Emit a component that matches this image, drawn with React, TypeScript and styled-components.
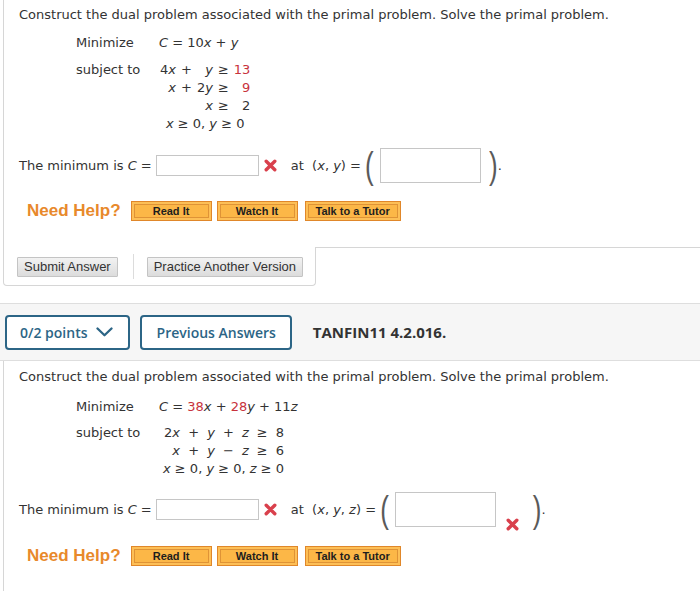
import React from 'react';
import styled, { createGlobalStyle } from 'styled-components';

const GlobalStyle = createGlobalStyle`
  html, body { margin: 0; padding: 0; background: #fff; }
  body {
    font-family: "DejaVu Sans", Verdana, sans-serif;
    font-size: 13px;
    color: #333;
  }
  * { box-sizing: border-box; }
`;

const Page = styled.div`
  width: 700px;
  height: 591px;
  overflow: hidden;
  background: #fff;
`;

const Body = styled.div<{ $top: number; $bottom: number }>`
  margin-left: 3px;
  border-left: 1px solid #d6d6d6;
  padding: ${p => p.$top}px 0 ${p => p.$bottom}px 15px;
`;

const Prompt = styled.p`
  margin: 0;
  line-height: 18px;
`;

const Problem = styled.div<{ $top: number; $rowGap: number }>`
  margin: ${p => p.$top}px 0 0 57px;
  display: grid;
  grid-template-columns: 83px auto;
  row-gap: ${p => p.$rowGap}px;
  align-items: start;
  line-height: 18px;
`;

const Var = styled.i`
  font-style: italic;
`;

const Red = styled.span`
  color: #c8323c;
`;

const Constraints = styled.div<{ $cols: number; $gap: number; $shift: number }>`
  display: grid;
  grid-template-columns: repeat(${p => p.$cols}, auto);
  column-gap: ${p => p.$gap}px;
  justify-items: end;
  justify-content: start;
  margin-left: ${p => p.$shift}px;
  line-height: 18px;
`;

const SpanRow = styled.span`
  grid-column: 1 / -1;
  justify-self: center;
`;

const AnswerRow = styled.div<{ $top: number }>`
  display: flex;
  align-items: center;
  height: 36px;
  margin-top: ${p => p.$top}px;
  white-space: pre;
`;

const SmallInput = styled.input`
  width: 103px;
  height: 21px;
  margin: 1px 0 0 4px;
  padding: 0;
  border: 1px solid #c6c6c6;
  background: #fff;
`;

const BigInput = styled.input`
  width: 101px;
  height: 35px;
  margin: 0 0 0 6px;
  padding: 0;
  border: 1px solid #c6c6c6;
  background: #fff;
`;

const Paren = styled.span`
  display: inline-block;
  font-family: "Liberation Sans", Arial, sans-serif;
  font-size: 26px;
  line-height: 1;
  color: #5a5a5a;
  transform: scaleY(1.4);
`;

const MarkWrap = styled.span<{ $left: number; $right: number; $low?: boolean }>`
  display: inline-flex;
  margin-left: ${p => p.$left}px;
  margin-right: ${p => p.$right}px;
  align-self: ${p => (p.$low ? 'flex-end' : 'center')};
  margin-bottom: ${p => (p.$low ? '-4px' : '0')};
`;

const WrongMark = ({ left, right, low }: { left: number; right: number; low?: boolean }) => (
  <MarkWrap $left={left} $right={right} $low={low}>
    <svg width="13" height="13" viewBox="0 0 13 13">
      <path d="M2.2 2.2 L10.8 10.8 M10.8 2.2 L2.2 10.8" stroke="#d9404c" strokeWidth="3.4" strokeLinecap="round" />
    </svg>
  </MarkWrap>
);

const HelpRow = styled.div<{ $top: number }>`
  display: flex;
  align-items: center;
  height: 20px;
  margin-top: ${p => p.$top}px;
`;

const HelpLabel = styled.span`
  font-family: "Liberation Sans", Arial, sans-serif;
  font-weight: bold;
  font-size: 17px;
  color: #e8892b;
  margin: 0 10px 0 8px;
`;

const HelpButton = styled.button<{ $gap: number }>`
  height: 20px;
  min-width: 81px;
  padding: 0 10px;
  margin-right: ${p => p.$gap}px;
  font-family: "Liberation Sans", Arial, sans-serif;
  font-weight: bold;
  font-size: 11px;
  color: #1e1e1e;
  background: #fcb747;
  border: 1px solid #e0872a;
  box-shadow: inset 0 0 0 2px #fdbf56, inset 0 0 0 3px #df9336;
  cursor: pointer;
`;

const Footer = styled.div`
  display: flex;
`;

const ActionTab = styled.div`
  margin-left: 3px;
  width: 313px;
  height: 39px;
  border: 1px solid #d6d6d6;
  border-top: none;
  border-radius: 0 0 4px 4px;
  display: flex;
  align-items: center;
  padding: 1px 0 0 13px;
`;

const FooterRest = styled.div`
  flex: 1;
  border-top: 1px solid #d6d6d6;
`;

const GrayButton = styled.button`
  height: 20px;
  padding: 0 6px;
  font-family: "Liberation Sans", Arial, sans-serif;
  font-size: 13px;
  color: #333;
  background: linear-gradient(#f2f2f2, #dcdcdc);
  border: 1px solid #c4c4c4;
  border-radius: 1px;
`;

const Divider = styled.span`
  width: 1px;
  height: 25px;
  background: #dcdcdc;
  margin: 0 13px 0 15px;
`;

const QuestionHeader = styled.div`
  margin-top: 17px;
  height: 58px;
  background: #f6f6f6;
  border-top: 1px solid #dedede;
  border-bottom: 1px solid #dedede;
  display: flex;
  align-items: center;
  padding-left: 5px;
`;

const OutlineButton = styled.button<{ $pl: number; $pr: number }>`
  height: 35px;
  display: inline-flex;
  align-items: center;
  gap: 8px;
  padding: 0 ${p => p.$pr}px 0 ${p => p.$pl}px;
  margin-right: 10px;
  background: #fff;
  border: 2px solid #2c6586;
  border-radius: 4px;
  font-family: "Open Sans", "Noto Sans", sans-serif;
  font-weight: 600;
  font-size: 14px;
  color: #2c6586;
`;

const QuestionTitle = styled.span`
  margin-left: 11px;
  font-family: "Open Sans", "Noto Sans", sans-serif;
  font-weight: 700;
  font-size: 15px;
  color: #333;
`;

const Chevron = () => (
  <svg width="17" height="10" viewBox="0 0 17 10">
    <polyline points="1.5,1.5 8.5,8.3 15.5,1.5" fill="none" stroke="#2c6586" strokeWidth="2.3" strokeLinecap="round" strokeLinejoin="round" />
  </svg>
);

const Help = ({ top }: { top: number }) => (
  <HelpRow $top={top}>
    <HelpLabel>Need Help?</HelpLabel>
    <HelpButton $gap={5}>Read It</HelpButton>
    <HelpButton $gap={7}>Watch It</HelpButton>
    <HelpButton $gap={0}>Talk to a Tutor</HelpButton>
  </HelpRow>
);

const PROMPT = 'Construct the dual problem associated with the primal problem. Solve the primal problem.';

export default function App() {
  return (
    <Page>
      <GlobalStyle />
      <Body $top={6} $bottom={26}>
        <Prompt>{PROMPT}</Prompt>
        <Problem $top={10} $rowGap={9}>
          <span>Minimize</span>
          <span>
            <Var>C</Var> = 10<Var>x</Var> + <Var>y</Var>
          </span>
          <span>subject to</span>
          <Constraints $cols={5} $gap={5} $shift={1}>
            <span>4<Var>x</Var></span>
            <span>+</span>
            <span><Var>y</Var></span>
            <span>≥</span>
            <Red>13</Red>
            <span><Var>x</Var></span>
            <span>+</span>
            <span>2<Var>y</Var></span>
            <span>≥</span>
            <Red>9</Red>
            <span />
            <span />
            <span><Var>x</Var></span>
            <span>≥</span>
            <span>2</span>
            <SpanRow>
              <Var>x</Var> ≥ 0, <Var>y</Var> ≥ 0
            </SpanRow>
          </Constraints>
        </Problem>
        <AnswerRow $top={14}>
          <span>The minimum is <Var>C</Var> =</span>
          <SmallInput readOnly />
          <WrongMark left={5} right={14} />
          <span>at  (<Var>x</Var>, <Var>y</Var>) = </span>
          <Paren>(</Paren>
          <BigInput readOnly />
          <span>  </span>
          <Paren>)</Paren>
          <span>.</span>
        </AnswerRow>
        <Help top={18} />
      </Body>
      <Footer>
        <ActionTab>
          <GrayButton>Submit Answer</GrayButton>
          <Divider />
          <GrayButton>Practice Another Version</GrayButton>
        </ActionTab>
        <FooterRest />
      </Footer>

      <QuestionHeader>
        <OutlineButton $pl={13} $pr={15}>
          0/2 points <Chevron />
        </OutlineButton>
        <OutlineButton $pl={15} $pr={14}>Previous Answers</OutlineButton>
        <QuestionTitle>TANFIN11 4.2.016.</QuestionTitle>
      </QuestionHeader>
      <Body $top={7} $bottom={40}>
        <Prompt>{PROMPT}</Prompt>
        <Problem $top={12} $rowGap={8}>
          <span>Minimize</span>
          <span>
            <Var>C</Var> = <Red>38</Red><Var>x</Var> + <Red>28</Red><Var>y</Var> + 11<Var>z</Var>
          </span>
          <span>subject to</span>
          <Constraints $cols={7} $gap={7} $shift={4}>
            <span>2<Var>x</Var></span>
            <span>+</span>
            <span><Var>y</Var></span>
            <span>+</span>
            <span><Var>z</Var></span>
            <span>≥</span>
            <span>8</span>
            <span><Var>x</Var></span>
            <span>+</span>
            <span><Var>y</Var></span>
            <span>−</span>
            <span><Var>z</Var></span>
            <span>≥</span>
            <span>6</span>
            <SpanRow>
              <Var>x</Var> ≥ 0, <Var>y</Var> ≥ 0, <Var>z</Var> ≥ 0
            </SpanRow>
          </Constraints>
        </Problem>
        <AnswerRow $top={13}>
          <span>The minimum is <Var>C</Var> =</span>
          <SmallInput readOnly />
          <WrongMark left={5} right={14} />
          <span>at  (<Var>x</Var>, <Var>y</Var>, <Var>z</Var>) = </span>
          <Paren>(</Paren>
          <BigInput readOnly />
          <WrongMark left={10} right={14} low />
          <Paren>)</Paren>
          <span>.</span>
        </AnswerRow>
        <Help top={19} />
      </Body>
    </Page>
  );
}
